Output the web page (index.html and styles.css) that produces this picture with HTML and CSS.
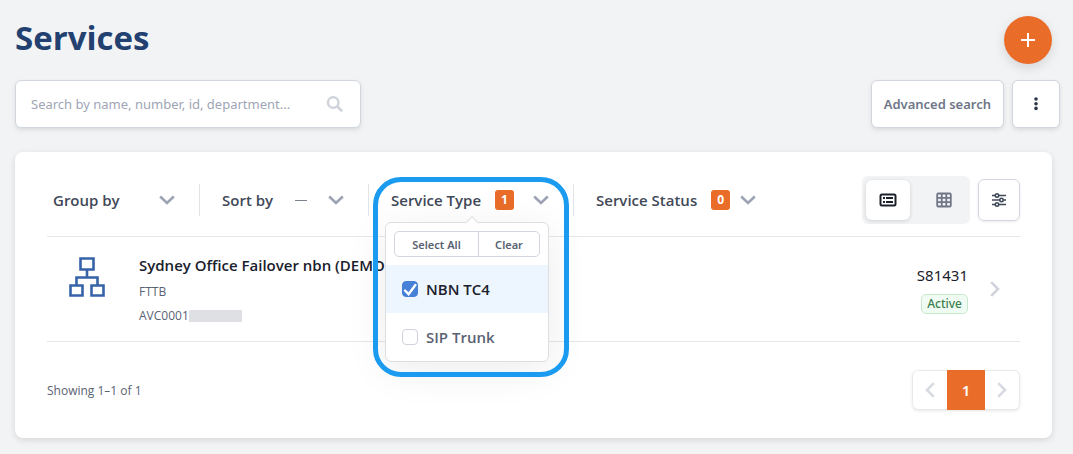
FILE: index.html
```html
<!DOCTYPE html>
<html lang="en">
<head>
<meta charset="utf-8">
<meta name="viewport" content="width=device-width, initial-scale=1">
<title>Services</title>
<link rel="stylesheet" href="styles.css">
</head>
<body>
<main class="page">
  <header class="page-header">
    <h1 class="page-title">Services</h1>
    <button class="add-button" type="button" aria-label="Add service">
      <svg width="16" height="16" viewBox="0 0 16 16"><path d="M8 1v14M1 8h14" stroke="currentColor" stroke-width="2" fill="none"/></svg>
    </button>
  </header>

  <div class="toolbar">
    <form class="search" role="search">
      <input class="search-input" type="text" aria-label="Search services" placeholder="Search by name, number, id, department...">
      <svg class="search-icon" width="18" height="18" viewBox="0 0 18 18"><circle cx="7.200" cy="7.500" r="5.300" fill="none" stroke="currentColor" stroke-width="2.400"/><path d="M11 11.300l5.200 4.900" stroke="currentColor" stroke-width="2.800"/></svg>
    </form>
    <div class="toolbar-actions">
      <button class="tool-button" type="button">Advanced search</button>
      <button class="tool-button tool-button-icon" type="button" aria-label="More actions">
        <svg width="16" height="16" viewBox="0 0 16 16" fill="currentColor"><circle cx="8" cy="3" r="1.800"/><circle cx="8" cy="7.700" r="1.800"/><circle cx="8" cy="12.400" r="1.800"/></svg>
      </button>
    </div>
  </div>

  <section class="card">
    <div class="filter-bar">
      <div class="filters">
        <div class="filter filter-group">
          <button class="filter-button" type="button">Group by
            <svg class="chevron" width="16" height="10" viewBox="0 0 16 10"><path d="M1.200 1.500L8 8l6.800-6.500"/></svg>
          </button>
        </div>
        <div class="filter filter-sort">
          <button class="filter-button" type="button">Sort by <span class="dash"></span>
            <svg class="chevron" width="16" height="10" viewBox="0 0 16 10"><path d="M1.200 1.500L8 8l6.800-6.500"/></svg>
          </button>
        </div>
        <div class="filter filter-type">
          <button class="filter-button" type="button" aria-expanded="true">Service Type <span class="count">1</span>
            <svg class="chevron" width="16" height="10" viewBox="0 0 16 10"><path d="M1.200 1.500L8 8l6.800-6.500"/></svg>
          </button>
          <div class="menu">
            <div class="menu-actions">
              <button class="menu-action menu-action-all" type="button">Select All</button>
              <button class="menu-action" type="button">Clear</button>
            </div>
            <label class="option option-selected"><input class="checkbox" type="checkbox" checked>NBN TC4</label>
            <label class="option"><input class="checkbox" type="checkbox">SIP Trunk</label>
          </div>
          <div class="highlight"></div>
        </div>
        <div class="filter filter-status">
          <button class="filter-button" type="button">Service Status <span class="count">0</span>
            <svg class="chevron" width="16" height="10" viewBox="0 0 16 10"><path d="M1.200 1.500L8 8l6.800-6.500"/></svg>
          </button>
        </div>
      </div>
      <div class="view-tools">
        <div class="view-switch">
          <button class="view-button view-button-active" type="button" aria-label="List view">
            <svg width="18" height="14" viewBox="0 0 18 14" fill="none" stroke="currentColor" stroke-width="2"><rect x="1.500" y="1.500" width="15" height="11" rx="1.500"/><path d="M4 5h2M7 5h7M4 9h2M7 9h7"/></svg>
          </button>
          <button class="view-button" type="button" aria-label="Grid view">
            <svg width="16" height="16" viewBox="0 0 16 16" fill="none" stroke="currentColor" stroke-width="1.800"><rect x="1.200" y="1.500" width="13.600" height="13" rx="1"/><path d="M5.700 1v14M10.300 1v14M1 5.800h14M1 10.200h14"/></svg>
          </button>
        </div>
        <button class="settings-button" type="button" aria-label="Display settings">
          <svg width="16" height="16" viewBox="0 0 16 16" fill="none" stroke="currentColor" stroke-width="1.600"><path d="M1 3.500h3.300M7.700 3.500H15M1 8h7.800M12.200 8H15M1 12.500h3.300M7.700 12.500H15"/><circle cx="6" cy="3.500" r="1.700"/><circle cx="10.500" cy="8" r="1.700"/><circle cx="6" cy="12.500" r="1.700"/></svg>
        </button>
      </div>
    </div>

    <article class="service">
      <svg class="service-icon" width="36" height="40" viewBox="0 0 36 40" fill="none" stroke="currentColor"><path d="M11.500 1.500h13v11h-13zM1.500 28.500h12v10h-12zM22.500 28.500h12v10h-12zM18 12.500v8M7.500 28v-7.500h21v7.500" stroke-width="2.600"/></svg>
      <div class="service-info">
        <h2 class="service-name">Sydney Office Failover nbn (DEMO)</h2>
        <p class="service-line">FTTB</p>
        <p class="service-line">AVC0001<span class="redacted"></span></p>
      </div>
      <div class="service-meta">
        <span class="service-id">S81431</span>
        <span class="status">Active</span>
      </div>
      <svg class="service-arrow" width="10" height="16" viewBox="0 0 10 16" fill="none" stroke="currentColor" stroke-width="2.600"><path d="M1.200 1.200L8 8l-6.800 6.800"/></svg>
    </article>

    <footer class="card-footer">
      <p class="summary">Showing 1–1 of 1</p>
      <nav class="pagination" aria-label="Pages">
        <button class="page-button" type="button" aria-label="Previous page"><svg width="10" height="16" viewBox="0 0 10 16" fill="none" stroke="currentColor" stroke-width="2.600"><path d="M8.800 1.200L2 8l6.800 6.800"/></svg></button>
        <button class="page-button page-button-current" type="button" aria-current="page">1</button>
        <button class="page-button" type="button" aria-label="Next page"><svg width="10" height="16" viewBox="0 0 10 16" fill="none" stroke="currentColor" stroke-width="2.600"><path d="M1.200 1.200L8 8l-6.800 6.800"/></svg></button>
      </nav>
    </footer>
  </section>
</main>
</body>
</html>
```

FILE: styles.css
```css
* { box-sizing: border-box; }

body {
  margin: 0;
  background: #f2f3f5;
  color: #1a202c;
  font-family: "Noto Sans", "Open Sans", sans-serif;
  font-size: 15px;
}

h1, h2, p { margin: 0; }

button, input { font: inherit; color: inherit; }

button {
  display: flex;
  align-items: center;
  justify-content: center;
  padding: 0;
  border: 0;
  background: none;
  cursor: pointer;
}

svg { flex: none; }

.page { padding: 16px 21px 16px 15px; }

.page-header {
  display: flex;
  align-items: center;
  justify-content: space-between;
  height: 48px;
}

.page-title {
  padding-bottom: 4px;
  color: #234170;
  font-family: "Open Sans", "Noto Sans", sans-serif;
  font-size: 33px;
  font-weight: 700;
  line-height: 44px;
}

.add-button {
  width: 48px;
  height: 48px;
  border-radius: 50%;
  background: #e96d29;
  color: #fff;
  box-shadow: 0 4px 12px rgba(0, 0, 0, 0.12);
}

.toolbar {
  display: flex;
  justify-content: space-between;
  margin: 16px -8px 24px 0;
}

.search {
  display: flex;
  align-items: center;
  width: 346px;
  height: 48px;
  padding: 0 16px 0 15px;
  border: 1px solid #d2d6de;
  border-radius: 6px;
  background: #fff;
  box-shadow: 0 2px 4px rgba(0, 0, 0, 0.1);
}

.search-input {
  flex: 1;
  min-width: 0;
  padding: 0;
  border: 0;
  outline: 0;
  background: none;
  font-size: 13px;
}

.search-input::placeholder { color: #a0a5b5; opacity: 1; }

.search-icon { color: #cfd3db; }

.toolbar-actions { display: flex; gap: 8px; }

.tool-button {
  height: 48px;
  padding: 0 12px;
  border: 1px solid #d2d6de;
  border-radius: 6px;
  background: #fff;
  box-shadow: 0 2px 4px rgba(0, 0, 0, 0.1);
  color: #6e7687;
  font-size: 13px;
  font-weight: 600;
}

.tool-button-icon { width: 48px; color: #2d3748; }

.card {
  padding: 0 32px 28px;
  border-radius: 8px;
  background: #fff;
  box-shadow: 0 2px 6px rgba(0, 0, 0, 0.12);
}

.filter-bar {
  display: flex;
  align-items: center;
  justify-content: space-between;
  padding: 24px 0 12px;
  border-bottom: 1px solid #e4e6e8;
}

.filters { display: flex; }

.filter {
  position: relative;
  height: 32px;
  padding: 0 24px 0 22px;
  border-right: 1px solid #e2e4e7;
}

.filter-group { width: 153px; padding-left: 6px; }
.filter-sort { width: 169px; }
.filter-type { width: 205px; }
.filter-status { width: 206px; border-right: 0; }

.filter-button {
  justify-content: flex-start;
  width: 100%;
  height: 32px;
  color: #414958;
  font-family: "Open Sans", "Noto Sans", sans-serif;
  font-size: 15px;
  font-weight: 600;
  white-space: nowrap;
}

.chevron {
  margin-left: auto;
  fill: none;
  stroke: #9da3b4;
  stroke-width: 2.6;
}

.dash {
  width: 12px;
  height: 1px;
  margin-left: 22px;
  background: #7c8290;
}

.count {
  width: 19px;
  margin-left: 14px;
  border-radius: 3px;
  background: #e96d29;
  color: #fff;
  font-size: 12px;
  font-weight: 700;
  line-height: 20px;
}

.menu {
  position: absolute;
  top: 38px;
  left: 16px;
  z-index: 2;
  width: 164px;
  padding-top: 8px;
  border: 1px solid #dcdee1;
  border-radius: 6px;
  background: #fff;
  box-shadow: 0 8px 40px rgba(0, 0, 0, 0.08);
}

.menu::before {
  content: "";
  position: absolute;
  top: -5px;
  left: 81px;
  width: 9px;
  height: 9px;
  border: solid #dcdee1;
  border-width: 1px 0 0 1px;
  background: #fff;
  transform: rotate(45deg);
}

.menu-actions {
  display: flex;
  margin: 0 8px 8px;
  border: 1px solid #d2d6de;
  border-radius: 5px;
}

.menu-action {
  flex: 1;
  height: 24px;
  color: #596273;
  font-size: 11px;
  font-weight: 600;
}

.menu-action-all { flex: none; width: 84px; border-right: 1px solid #d2d6de; }

.option {
  display: flex;
  align-items: center;
  gap: 8px;
  height: 48px;
  padding: 0 16px;
  color: #596273;
  font-family: "Open Sans", "Noto Sans", sans-serif;
  font-size: 15px;
  font-weight: 600;
}

.option-selected { background: #edf6fe; color: #1a202c; }

.checkbox {
  width: 16px;
  height: 16px;
  margin: 0;
  border: 1px solid #cfd2dc;
  border-radius: 4px;
  background: #fff;
  appearance: none;
}

.checkbox:checked {
  border-color: #4780d7;
  background: #4780d7 url("data:image/svg+xml,%3Csvg xmlns='http://www.w3.org/2000/svg' viewBox='0 0 16 16'%3E%3Cpath d='M3 9.500l3.600 3.700L13.400 4' fill='none' stroke='white' stroke-width='2.400' stroke-linecap='round'/%3E%3C/svg%3E") center / 16px 16px;
}

.highlight {
  position: absolute;
  top: -7px;
  left: 4px;
  z-index: 3;
  width: 196px;
  height: 200px;
  border: 5px solid #1a9bf0;
  border-radius: 28px;
  pointer-events: none;
}

.view-tools { display: flex; align-items: center; gap: 8px; }

.view-switch {
  display: flex;
  gap: 12px;
  padding: 4px;
  border-radius: 6px;
  background: #f2f3f5;
}

.view-button { width: 44px; height: 40px; border-radius: 6px; color: #6e7687; }

.view-button-active {
  background: #fff;
  color: #1a202c;
  box-shadow: 0 1px 4px rgba(0, 0, 0, 0.14);
}

.settings-button {
  width: 42px;
  height: 42px;
  border: 1px solid #d2d6de;
  border-radius: 6px;
  box-shadow: 0 1px 3px rgba(0, 0, 0, 0.08);
  color: #414958;
}

.service {
  display: flex;
  align-items: center;
  height: 105px;
  padding: 0 20px 0 22px;
  border-bottom: 1px solid #e4e6e8;
}

.service-icon { align-self: flex-start; margin-top: 20px; color: #3663a8; }

.service-info { flex: 1; margin-left: 34px; padding-top: 2px; }

.service-name {
  margin-bottom: 2px;
  font-family: "Open Sans", "Noto Sans", sans-serif;
  font-size: 15px;
  font-weight: 600;
  line-height: 26px;
}

.service-line {
  color: #596273;
  font-family: "Open Sans", "Noto Sans", sans-serif;
  font-size: 12px;
  line-height: 24px;
}

.redacted {
  display: inline-block;
  width: 53px;
  height: 12px;
  background: #dfe0e3;
  vertical-align: -2px;
}

.service-meta {
  display: flex;
  flex-direction: column;
  align-items: flex-end;
  gap: 8px;
  margin-right: 22px;
}

.service-id { font-size: 15px; line-height: 22px; }

.status {
  padding: 0 5px;
  border: 1px solid #c8ebcd;
  border-radius: 5px;
  background: #f0fcf3;
  color: #3b8051;
  font-size: 12px;
  font-weight: 500;
  line-height: 18px;
}

.service-arrow { color: #d0d3dc; }

.card-footer {
  display: flex;
  align-items: center;
  justify-content: space-between;
  padding-top: 28px;
}

.summary {
  color: #596273;
  font-family: "Open Sans", "Noto Sans", sans-serif;
  font-size: 12px;
}

.pagination {
  display: flex;
  border-radius: 6px;
  box-shadow: 0 1px 3px rgba(0, 0, 0, 0.1);
}

.page-button {
  width: 35px;
  height: 40px;
  border: 1px solid #e9eaed;
  border-width: 1px 0 1px 1px;
  border-radius: 6px 0 0 6px;
  color: #d8dae1;
}

.page-button:last-child { border-width: 1px 1px 1px 0; border-radius: 0 6px 6px 0; }

.page-button-current {
  width: 38px;
  border: 0;
  border-radius: 0;
  background: #e96d29;
  color: #fff;
  font-size: 15px;
  font-weight: 600;
}
```
